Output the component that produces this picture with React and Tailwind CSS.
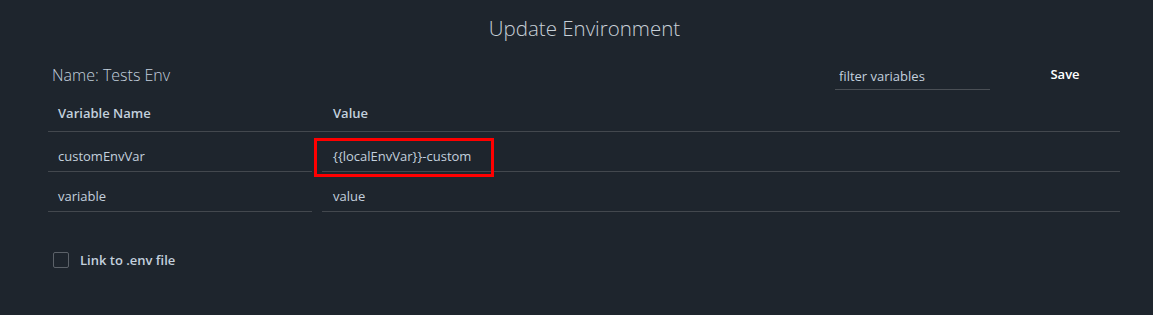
import React, { useState } from "react";

const rows = [
  { name: "customEnvVar", value: "{{localEnvVar}}-custom" },
  { name: "variable", value: "value" },
];

const UpdateEnvironment = () => {
  const [filter, setFilter] = useState("");
  const [linked, setLinked] = useState(false);

  return (
    <div className="relative h-[315px] w-full bg-[#1e252d] font-['Open_Sans',sans-serif] text-[#c3d0dd]">
      <h1 className="pl-[16px] pt-[13px] text-center text-[20.5px] font-light leading-[30px] text-[#c8d0d8]">
        Update Environment
      </h1>

      <div className="mt-[17px] flex items-center pl-[48px] pr-[43px]">
        <div className="pl-[4px] text-[16px] font-light">Name: Tests Env</div>
        <input
          value={filter}
          onChange={(e) => setFilter(e.target.value)}
          placeholder="filter variables"
          className="ml-auto w-[155px] border-b border-[#4a4f55] bg-transparent px-[4px] pb-[2px] pt-[7px] text-[13px] placeholder:text-[#c3d0dd] focus:outline-none"
        />
        <button className="ml-[30px] w-[90px] text-[13px] font-semibold text-white">
          Save
        </button>
      </div>

      <div className="mx-[48px] mt-[8px] w-[1072px]">
        <div className="flex h-[34px] items-center border-b border-[#43484e] text-[13px] font-semibold">
          <div className="w-[274px] pl-[10px]">Variable Name</div>
          <div className="pl-[11px]">Value</div>
        </div>
        {rows.map((row, i) => (
          <div key={i} className="flex h-[40px] gap-[10px] text-[13px]">
            <div className="flex w-[264px] items-center border-b border-[#43484e] pl-[10px] pt-[12px]">
              {row.name}
            </div>
            <div className="flex flex-1 items-center border-b border-[#43484e] pl-[11px] pt-[12px]">
              {row.value}
            </div>
          </div>
        ))}
      </div>

      <label className="ml-[53px] mt-[39px] flex w-fit cursor-pointer items-center gap-[11px] text-[13px] font-semibold">
        <span
          onClick={() => setLinked(!linked)}
          className="block h-[16px] w-[16px] rounded-[2px] border border-[#5c6269]"
        />
        Link to .env file
      </label>

      {/* annotation box */}
      <div className="pointer-events-none absolute left-[314px] top-[138px] h-[39px] w-[180px] border-[3px] border-[#ff0000]" />
    </div>
  );
};

export default function App() {
  return <UpdateEnvironment />;
}
